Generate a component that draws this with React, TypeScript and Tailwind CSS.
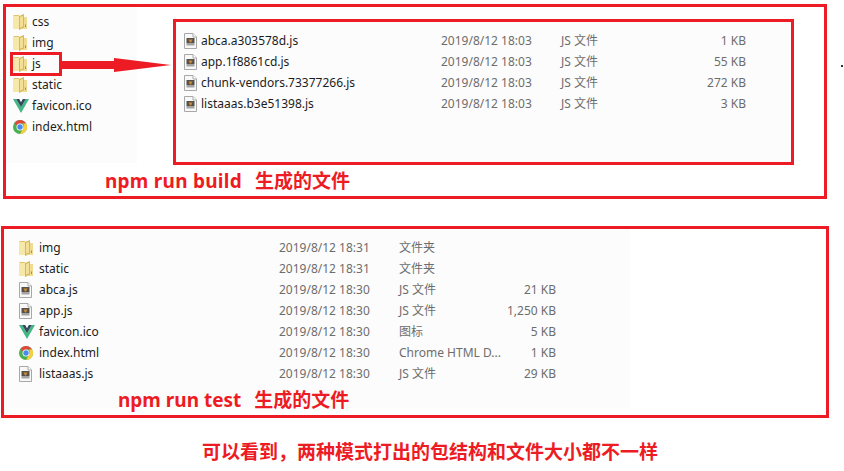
import React from 'react'

type IconKind = 'folder' | 'file' | 'vue' | 'chrome'

interface Entry {
    icon: IconKind
    name: string
    date?: string
    type?: string
    size?: string
}

const buildFolders: Entry[] = [
    { icon: 'folder', name: 'css' },
    { icon: 'folder', name: 'img' },
    { icon: 'folder', name: 'js' },
    { icon: 'folder', name: 'static' },
    { icon: 'vue', name: 'favicon.ico' },
    { icon: 'chrome', name: 'index.html' },
]

const buildJs: Entry[] = [
    { icon: 'file', name: 'abca.a303578d.js', date: '2019/8/12 18:03', type: 'JS 文件', size: '1 KB' },
    { icon: 'file', name: 'app.1f8861cd.js', date: '2019/8/12 18:03', type: 'JS 文件', size: '55 KB' },
    { icon: 'file', name: 'chunk-vendors.73377266.js', date: '2019/8/12 18:03', type: 'JS 文件', size: '272 KB' },
    { icon: 'file', name: 'listaaas.b3e51398.js', date: '2019/8/12 18:03', type: 'JS 文件', size: '3 KB' },
]

const testFiles: Entry[] = [
    { icon: 'folder', name: 'img', date: '2019/8/12 18:31', type: '文件夹' },
    { icon: 'folder', name: 'static', date: '2019/8/12 18:31', type: '文件夹' },
    { icon: 'file', name: 'abca.js', date: '2019/8/12 18:30', type: 'JS 文件', size: '21 KB' },
    { icon: 'file', name: 'app.js', date: '2019/8/12 18:30', type: 'JS 文件', size: '1,250 KB' },
    { icon: 'vue', name: 'favicon.ico', date: '2019/8/12 18:30', type: '图标', size: '5 KB' },
    { icon: 'chrome', name: 'index.html', date: '2019/8/12 18:30', type: 'Chrome HTML D...', size: '1 KB' },
    { icon: 'file', name: 'listaaas.js', date: '2019/8/12 18:30', type: 'JS 文件', size: '29 KB' },
]

function FolderIcon() {
    return (
        <svg width="14" height="16" viewBox="0 0 14 16">
            <path d="M0 2h6v13H0z" fill="#f6e8a8" />
            <path d="M0 2h6V1H1z" fill="#dcc373" />
            <path d="M6 2 11 0v14l-5 2z" fill="#d6b75c" />
            <path d="M7 3l3-1.200V12.500L7 13.800z" fill="#f3e096" />
            <path d="M11 3h3v12H6.500l4.500-1.500z" fill="#efdc92" />
            <path d="M12 10.500h1V13h-1z" fill="#5a9bd8" />
        </svg>
    )
}

function FileIcon() {
    return (
        <svg width="13" height="16" viewBox="0 0 13 16">
            <path d="M.5.5h8.500l3.500 3.500v11.500H.5z" fill="#f8f8f8" stroke="#a8a8a8" />
            <path d="M9 .5V4h3.500" fill="#ffffff" stroke="#a8a8a8" />
            <rect x="2.500" y="5" width="8" height="5" fill="#55504a" />
            <rect x="2.500" y="10" width="8" height="2.500" fill="#a3a3a3" />
            <path d="M4.500 6.500h4L7 9.500H6z" fill="#d08a35" />
        </svg>
    )
}

function VueIcon() {
    return (
        <svg width="16" height="14" viewBox="0 0 16 14">
            <path d="M0 0h3.200L8 8.200 12.800 0H16L8 14z" fill="#41b883" />
            <path d="M3.200 0h3L8 3.200 9.800 0h3L8 8.200z" fill="#35495e" />
        </svg>
    )
}

function ChromeIcon() {
    return (
        <svg width="14" height="14" viewBox="0 0 14 14">
            <circle cx="7" cy="7" r="7" fill="#4caf50" />
            <path d="M7 0a7 7 0 0 1 6.100 3.500H7a3.500 3.500 0 0 0-3.200 2L1.400 2.800A7 7 0 0 1 7 0z" fill="#e0483e" />
            <path d="M13.100 3.500A7 7 0 0 1 7 14l3-5.200a3.500 3.500 0 0 0-.4-5.300z" fill="#f9cf3c" />
            <circle cx="7" cy="7" r="3.500" fill="#ffffff" />
            <circle cx="7" cy="7" r="2.700" fill="#4a8af0" />
        </svg>
    )
}

function RowIcon({ kind }: { kind: IconKind }) {
    if (kind === 'folder') return <FolderIcon />
    if (kind === 'file') return <FileIcon />
    if (kind === 'vue') return <VueIcon />
    return <ChromeIcon />
}

function NameCell({ entry, iconWidth }: { entry: Entry; iconWidth: string }) {
    return (
        <div className="flex items-center h-[21px]">
            <span className={`${iconWidth} flex items-center justify-start shrink-0`}>
                <RowIcon kind={entry.icon} />
            </span>
            <span className="text-[#1c1c1c] whitespace-nowrap">{entry.name}</span>
        </div>
    )
}

function DetailRow({ entry, nameWidth, typeWidth, iconWidth }: { entry: Entry; nameWidth: string; typeWidth: string; iconWidth: string }) {
    return (
        <div className="flex items-center h-[21px]">
            <div className={nameWidth}>
                <NameCell entry={entry} iconWidth={iconWidth} />
            </div>
            <span className="w-[120px] text-[#6d6d6d] whitespace-nowrap">{entry.date}</span>
            <span className={`${typeWidth} flex justify-between text-[#6d6d6d] whitespace-nowrap`}>
                <span>{entry.type}</span>
                <span>{entry.size}</span>
            </span>
        </div>
    )
}

function Caption({ latin, className, latinClass }: { latin: string; className: string; latinClass: string }) {
    return (
        <p className={`absolute flex text-[#ed1c24] font-bold text-[19px] leading-[26px] whitespace-nowrap ${className}`}>
            <span className={latinClass}>{latin}</span>
            <span className="ml-[13px]">生成的文件</span>
        </p>
    )
}

export default function App() {
    return (
        <div className="relative w-[844px] h-[471px] bg-white overflow-hidden text-[12px] font-['Noto_Sans','Noto_Sans_CJK_SC',sans-serif]">
            <div className="h-[4px]" />

            {/* npm run build */}
            <section className="relative ml-[3px] w-[824px] h-[195px] border-[3px] border-[#ed1c24] flex">
                <div className="w-[131px] h-[156px] bg-[#fcfcfc] pl-[7px] pt-[4px] shrink-0">
                    {buildFolders.map((e) => (
                        <NameCell key={e.name} entry={e} iconWidth="w-[19px]" />
                    ))}
                </div>
                <div className="ml-[36px] mt-[12px] w-[621px] h-[146px] border-[3px] border-[#ed1c24] bg-[#fcfcfc] pl-[8px] pt-[8px]">
                    {buildJs.map((e) => (
                        <DetailRow key={e.name} entry={e} nameWidth="w-[257px]" typeWidth="w-[185px]" iconWidth="w-[17px]" />
                    ))}
                </div>
                <Caption latin="npm run build" latinClass="tracking-[0.25px]" className="left-[99px] top-[161px]" />
            </section>

            {/* js folder highlight and arrow */}
            <div className="absolute left-[10px] top-[52px] w-[52px] h-[24px] border-[3px] border-[#ed1c24]" />
            <svg className="absolute left-[62px] top-[56px]" width="110" height="18" viewBox="0 0 110 18">
                <path d="M0 5h52V2l57 7-57 7v-3H0z" fill="#ed1c24" />
            </svg>
            <span className="absolute left-[841px] top-[65px] w-[2px] h-[2px] bg-[#333333]" />

            <div className="h-[27px]" />

            {/* npm run test */}
            <section className="relative ml-[1px] w-[828px] h-[192px] border-[3px] border-[#ed1c24]">
                <div className="w-[626px] h-[179px] bg-[#fcfcfc] pl-[15px] pt-[8px]">
                    {testFiles.map((e) => (
                        <DetailRow key={e.name} entry={e} nameWidth="w-[260px]" typeWidth="w-[157px]" iconWidth="w-[20px]" />
                    ))}
                </div>
                <Caption latin="npm run test" latinClass="tracking-normal" className="left-[114px] top-[158px]" />
            </section>

            <p className="mt-[21px] ml-[202px] text-[#ed1c24] font-bold text-[19px] leading-[26px] whitespace-nowrap">
                可以看到，两种模式打出的包结构和文件大小都不一样
            </p>
        </div>
    )
}
